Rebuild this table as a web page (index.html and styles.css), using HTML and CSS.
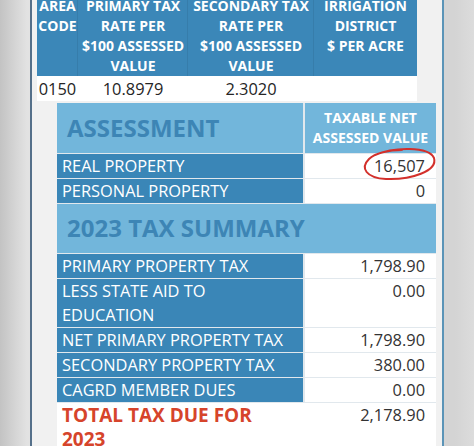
FILE: index.html
```html
<!DOCTYPE html>
<html>
<head>
<meta charset="utf-8">
<link rel="stylesheet" href="styles.css">
</head>
<body>
<div class="panel">
  <div class="rates">
    <div class="rh sep">AREA<br>CODE</div>
    <div class="rh sep">PRIMARY TAX<br>RATE PER<br>$100 ASSESSED<br>VALUE</div>
    <div class="rh sep">SECONDARY TAX<br>RATE PER<br>$100 ASSESSED<br>VALUE</div>
    <div class="rh">IRRIGATION<br>DISTRICT<br>$ PER ACRE</div>
    <div class="rd">0150</div>
    <div class="rd">10.8979</div>
    <div class="rd">2.3020</div>
    <div class="rd"></div>
  </div>
  <div class="summary">
    <div class="sec-title">ASSESSMENT</div>
    <div class="sec-col">TAXABLE NET<br>ASSESSED VALUE</div>
    <div class="lbl">REAL PROPERTY</div>
    <div class="val circled">16,507<svg class="ring" viewBox="0 0 131 40"><path d="M70 9 C88 1 124 0 129 12 C133 25 106 34 81 33 C61 32 55 22 64 13 C70 7 84 4 97 4" fill="none" stroke="#d3302b" stroke-width="2" stroke-linecap="round"/></svg></div>
    <div class="lbl">PERSONAL PROPERTY</div>
    <div class="val">0</div>
    <div class="sec-title wide">2023 TAX SUMMARY</div>
    <div class="lbl">PRIMARY PROPERTY TAX</div>
    <div class="val">1,798.90</div>
    <div class="lbl">LESS STATE AID TO<br>EDUCATION</div>
    <div class="val">0.00</div>
    <div class="lbl">NET PRIMARY PROPERTY TAX</div>
    <div class="val">1,798.90</div>
    <div class="lbl">SECONDARY PROPERTY TAX</div>
    <div class="val">380.00</div>
    <div class="lbl">CAGRD MEMBER DUES</div>
    <div class="val">0.00</div>
    <div class="total">
      <div class="total-lbl">TOTAL TAX DUE FOR<br>2023</div>
      <div class="val">2,178.90</div>
    </div>
  </div>
</div>
</body>
</html>
```

FILE: styles.css
```css
html, body {
  margin: 0;
  padding: 0;
}
body {
  height: 446px;
  overflow: hidden;
  font-family: "Open Sans", "DejaVu Sans", sans-serif;
  background: linear-gradient(90deg, #c3c3c3 0px, #d6d6d6 16px, #e2e2e2 27px, #e2e2e2 30px, #d4d4d4 30px, #d4d4d4 455px, #dcdcdc 474px);
}
.panel {
  margin-left: 30px;
  width: 410px;
  height: 446px;
  border-left: 2px solid #55708a;
  border-right: 2px solid #5b94b7;
  background: #f1f1f1;
  overflow: hidden;
}
.rates {
  display: grid;
  grid-template-columns: 41px 110px 126px 103px;
  width: 380px;
  margin: -4px 0 0 5px;
}
.rh {
  background: #3b87b8;
  color: #fff;
  font-weight: 700;
  font-size: 14px;
  line-height: 20px;
  text-align: center;
  height: 80px;
  white-space: nowrap;
}
.rh.sep {
  box-shadow: inset -1px 0 0 rgba(0, 0, 0, 0.07);
}
.rd {
  background: #fff;
  height: 25px;
  font-size: 16.4px;
  line-height: 25px;
  text-align: center;
  color: #252525;
  white-space: nowrap;
}
.summary {
  display: grid;
  grid-template-columns: 246px 131px;
  gap: 1px 2px;
  width: 379px;
  margin: 2px 0 0 25px;
  background: #e1e8ed;
}
.sec-title {
  background: #72b6db;
  color: #3d85b5;
  font-size: 24px;
  font-weight: 700;
  height: 50px;
  display: flex;
  align-items: center;
  padding-left: 10px;
  padding-bottom: 2px;
  box-sizing: border-box;
}
.sec-title.wide {
  grid-column: 1 / -1;
  height: 49px;
}
.sec-col {
  background: #72b6db;
  color: #fff;
  font-weight: 700;
  font-size: 14px;
  line-height: 20px;
  text-align: center;
  display: flex;
  align-items: center;
  justify-content: center;
}
.lbl {
  background: #3a86b7;
  color: #fff;
  font-size: 16.4px;
  line-height: 24px;
  padding-left: 5px;
  white-space: nowrap;
}
.val {
  background: #fff;
  color: #333;
  font-size: 16.4px;
  line-height: 24px;
  text-align: right;
  padding-right: 11px;
}
.circled {
  position: relative;
}
.ring {
  position: absolute;
  left: 0;
  top: -8px;
  width: 131px;
  height: 40px;
  overflow: visible;
  pointer-events: none;
}
.total {
  grid-column: 1 / -1;
  display: grid;
  grid-template-columns: 248px 131px;
  background: #fff;
  height: 60px;
}
.total-lbl {
  color: #d6442b;
  font-weight: 700;
  font-size: 19px;
  line-height: 24px;
  padding-left: 5px;
}
```
